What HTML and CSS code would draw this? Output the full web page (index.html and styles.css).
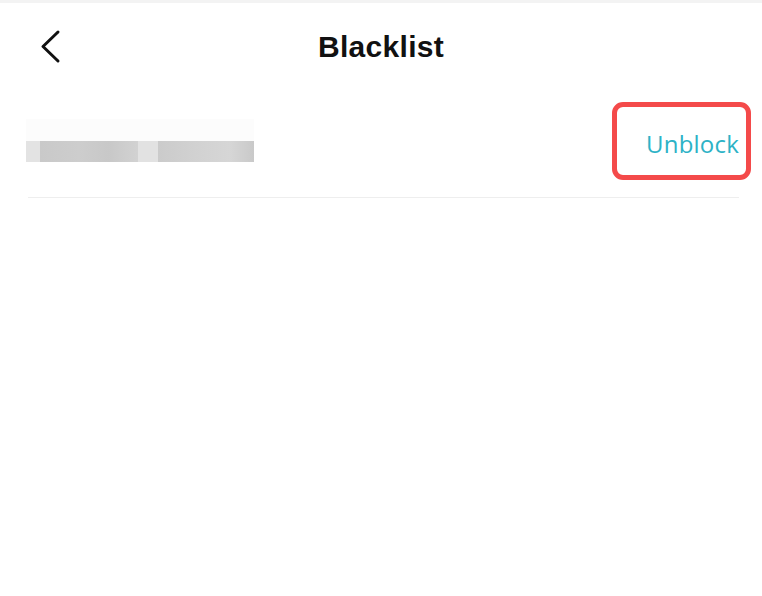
FILE: index.html
```html
<!DOCTYPE html>
<html>
<head>
<meta charset="utf-8">
<link rel="stylesheet" href="styles.css">
</head>
<body>
<div class="topline"></div>
<header class="header">
  <button class="back" aria-label="Back">
    <svg width="24" height="36" viewBox="0 0 24 36"><path d="M18 3 L3 17.5 L18 32" fill="none" stroke="#111" stroke-width="3" stroke-linecap="round" stroke-linejoin="round"/></svg>
  </button>
  <h1 class="title">Blacklist</h1>
</header>
<ul class="list">
  <li class="item">
    <div class="name">
      <div class="name-top"></div>
      <div class="name-bar">
        <span class="b1"></span><span class="b2"></span><span class="b3"></span><span class="b4"></span>
      </div>
    </div>
    <div class="action">
      <span class="unblock">Unblock</span>
      <span class="highlight"></span>
    </div>
  </li>
</ul>
</body>
</html>
```
FILE: styles.css
```css
html, body {
  margin: 0;
  padding: 0;
  background: #fff;
  font-family: "Liberation Sans", Arial, sans-serif;
}
.topline {
  height: 3px;
  background: #f3f3f3;
}
.header {
  position: relative;
  height: 87px;
  display: flex;
  align-items: center;
  justify-content: center;
}
.back {
  position: absolute;
  left: 40px;
  top: 26px;
  border: 0;
  background: none;
  padding: 0;
  width: 24px;
  height: 36px;
}
.back svg { display: block; }
.title {
  margin: 0;
  font-size: 30px;
  font-weight: bold;
  color: #111;
  letter-spacing: 0.3px;
}
.list {
  list-style: none;
  margin: 0;
  padding: 0 23px 0 28px;
}
.item {
  display: flex;
  justify-content: space-between;
  align-items: center;
  height: 107px;
  border-bottom: 1px solid #eeeeee;
}
.name {
  margin-left: -2px;
  width: 228px;
  margin-top: -6px;
}
.name-top {
  height: 22px;
  background: #fcfcfc;
}
.name-bar {
  display: flex;
  height: 21px;
}
.name-bar span { display: block; height: 100%; }
.b1 { width: 14px; background: #e3e3e3; }
.b2 { width: 98px; background: linear-gradient(90deg, #c9c9c9, #cdcdcd 40%, #c8c8c8 70%, #d2d2d2); }
.b3 { width: 20px; background: #e2e2e2; }
.b4 { width: 96px; background: linear-gradient(90deg, #cbcbcb, #d3d3d3 50%, #d6d6d6 75%, #c9c9c9); }
.action {
  position: relative;
  margin-top: 0px;
}
.unblock {
  font-family: "Open Sans", sans-serif;
  font-size: 24px;
  color: #2db2c6;
  letter-spacing: 0.2px;
}
.highlight {
  position: absolute;
  left: -34px;
  right: -12px;
  top: -25px;
  bottom: -20px;
  border: 5px solid #f44a4a;
  border-radius: 11px;
}
```
